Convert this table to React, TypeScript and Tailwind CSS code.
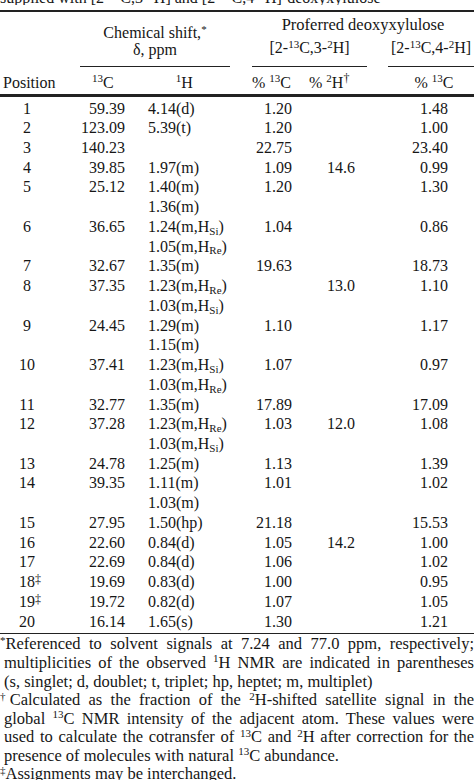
import React from "react"

type HShift = { v: string; sub?: string }

interface Row {
  pos: string
  mark?: string
  c13: string
  h1: HShift[]
  pc3: string
  ph3: string
  pc4: string
}

const rows: Row[] = [
  { pos: "1", c13: "59.39", h1: [{ v: "4.14(d)" }], pc3: "1.20", ph3: "", pc4: "1.48" },
  { pos: "2", c13: "123.09", h1: [{ v: "5.39(t)" }], pc3: "1.20", ph3: "", pc4: "1.00" },
  { pos: "3", c13: "140.23", h1: [], pc3: "22.75", ph3: "", pc4: "23.40" },
  { pos: "4", c13: "39.85", h1: [{ v: "1.97(m)" }], pc3: "1.09", ph3: "14.6", pc4: "0.99" },
  { pos: "5", c13: "25.12", h1: [{ v: "1.40(m)" }, { v: "1.36(m)" }], pc3: "1.20", ph3: "", pc4: "1.30" },
  {
    pos: "6",
    c13: "36.65",
    h1: [
      { v: "1.24(m,H", sub: "Si" },
      { v: "1.05(m,H", sub: "Re" },
    ],
    pc3: "1.04",
    ph3: "",
    pc4: "0.86",
  },
  { pos: "7", c13: "32.67", h1: [{ v: "1.35(m)" }], pc3: "19.63", ph3: "", pc4: "18.73" },
  {
    pos: "8",
    c13: "37.35",
    h1: [
      { v: "1.23(m,H", sub: "Re" },
      { v: "1.03(m,H", sub: "Si" },
    ],
    pc3: "",
    ph3: "13.0",
    pc4: "1.10",
  },
  { pos: "9", c13: "24.45", h1: [{ v: "1.29(m)" }, { v: "1.15(m)" }], pc3: "1.10", ph3: "", pc4: "1.17" },
  {
    pos: "10",
    c13: "37.41",
    h1: [
      { v: "1.23(m,H", sub: "Si" },
      { v: "1.03(m,H", sub: "Re" },
    ],
    pc3: "1.07",
    ph3: "",
    pc4: "0.97",
  },
  { pos: "11", c13: "32.77", h1: [{ v: "1.35(m)" }], pc3: "17.89", ph3: "", pc4: "17.09" },
  {
    pos: "12",
    c13: "37.28",
    h1: [
      { v: "1.23(m,H", sub: "Re" },
      { v: "1.03(m,H", sub: "Si" },
    ],
    pc3: "1.03",
    ph3: "12.0",
    pc4: "1.08",
  },
  { pos: "13", c13: "24.78", h1: [{ v: "1.25(m)" }], pc3: "1.13", ph3: "", pc4: "1.39" },
  { pos: "14", c13: "39.35", h1: [{ v: "1.11(m)" }, { v: "1.03(m)" }], pc3: "1.01", ph3: "", pc4: "1.02" },
  { pos: "15", c13: "27.95", h1: [{ v: "1.50(hp)" }], pc3: "21.18", ph3: "", pc4: "15.53" },
  { pos: "16", c13: "22.60", h1: [{ v: "0.84(d)" }], pc3: "1.05", ph3: "14.2", pc4: "1.00" },
  { pos: "17", c13: "22.69", h1: [{ v: "0.84(d)" }], pc3: "1.06", ph3: "", pc4: "1.02" },
  { pos: "18", mark: "‡", c13: "19.69", h1: [{ v: "0.83(d)" }], pc3: "1.00", ph3: "", pc4: "0.95" },
  { pos: "19", mark: "‡", c13: "19.72", h1: [{ v: "0.82(d)" }], pc3: "1.07", ph3: "", pc4: "1.05" },
  { pos: "20", c13: "16.14", h1: [{ v: "1.65(s)" }], pc3: "1.30", ph3: "", pc4: "1.21" },
]

function Iso({ n, el }: { n: string; el: string }) {
  return (
    <>
      <sup className="text-[11px]">{n}</sup>
      {el}
    </>
  )
}

function DataRow({ row }: { row: Row }) {
  return (
    <div className="grid grid-cols-[54px_71px_96px_71px_96px_60px] leading-[19.73px]">
      <div className="text-center">
        {row.pos}
        {row.mark && (
          <span className="inline-block w-0 align-top text-[12px] leading-[14px]">{row.mark}</span>
        )}
      </div>
      <div className="text-right">{row.c13}</div>
      <div className="pl-[23px] whitespace-nowrap">
        {row.h1.map((h, i) => (
          <div key={i}>
            {h.v}
            {h.sub && (
              <>
                <sub className="text-[11px]">{h.sub}</sub>)
              </>
            )}
          </div>
        ))}
      </div>
      <div className="text-right">{row.pc3}</div>
      <div className="pl-[35px]">{row.ph3}</div>
      <div className="text-right">{row.pc4}</div>
    </div>
  )
}

function Justified({ children, indent }: { children: React.ReactNode; indent?: boolean }) {
  return (
    <div
      className={`text-justify [text-align-last:justify] whitespace-nowrap ${indent ? "pl-[4px]" : ""}`}
    >
      {children}
    </div>
  )
}

export default function App() {
  return (
    <div
      className="w-[474px] h-[780px] overflow-hidden bg-white text-[16px] text-[#161616]"
      style={{ fontFamily: '"Liberation Serif", "Times New Roman", serif' }}
    >
      <div className="h-[5px] overflow-hidden">
        <div className="-mt-[12px] leading-[19px] whitespace-nowrap">
          supplied with [2-<Iso n="13" el="C" />,3-<Iso n="2" el="H" />] and [2-
          <Iso n="13" el="C" />,4-<Iso n="2" el="H" />]-deoxyxylulose
        </div>
      </div>

      <div className="mt-[5px] h-[1.5px] bg-[#222]" />

      <div className="grid h-[82.5px] grid-cols-[80px_150px_22px_222px] items-end pb-[2.5px]">
        <div className="pl-[3px] leading-[19px]">Position</div>

        <div className="flex flex-col">
          <div className="text-center leading-[17px]">
            Chemical shift,<sup className="text-[11px]">*</sup>
          </div>
          <div className="text-center leading-[17px]">δ, ppm</div>
          <div className="mt-[7.5px] h-[1.2px] bg-[#222]" />
          <div className="mt-[5.5px] flex leading-[19px]">
            <span className="ml-[12px]">
              <Iso n="13" el="C" />
            </span>
            <span className="ml-[62px]">
              <Iso n="1" el="H" />
            </span>
          </div>
        </div>

        <div />

        <div className="flex flex-col">
          <div className="text-center leading-[19px] text-[16.5px]">Proferred deoxyxylulose</div>
          <div className="mt-[4px] flex gap-[21px]">
            <div className="flex w-[115px] flex-col">
              <div className="text-center leading-[19px] whitespace-nowrap">
                [2-<Iso n="13" el="C" />,3-<Iso n="2" el="H" />]
              </div>
              <div className="mt-[8.5px] h-[1.2px] bg-[#222]" />
              <div className="mt-[5.5px] flex leading-[19px] whitespace-nowrap">
                <span>
                  % <Iso n="13" el="C" />
                </span>
                <span className="ml-[18px]">
                  % <Iso n="2" el="H" />
                  <sup className="text-[12px]">†</sup>
                </span>
              </div>
            </div>
            <div className="flex w-[86px] flex-col">
              <div className="text-center leading-[19px] whitespace-nowrap">
                [2-<Iso n="13" el="C" />,4-<Iso n="2" el="H" />]
              </div>
              <div className="mt-[8.5px] h-[1.2px] bg-[#222]" />
              <div className="mt-[5.5px] pl-[6px] text-center leading-[19px] whitespace-nowrap">
                % <Iso n="13" el="C" />
              </div>
            </div>
          </div>
        </div>
      </div>

      <div className="h-[2.5px] bg-[#222]" />

      <div className="pt-[2px]">
        {rows.map((r) => (
          <DataRow key={r.pos} row={r} />
        ))}
      </div>

      <div className="mt-[1.5px] h-[1.5px] bg-[#222]" />

      <div className="mt-[1px] text-[16.5px] leading-[18.6px]">
        <Justified>
          <sup className="text-[11px]">*</sup>Referenced to solvent signals at 7.24 and 77.0 ppm, respectively;
        </Justified>
        <Justified indent>
          multiplicities of the observed <Iso n="1" el="H" /> NMR are indicated in parentheses
        </Justified>
        <div className="pl-[4px]">(s, singlet; d, doublet; t, triplet; hp, heptet; m, multiplet)</div>
        <Justified>
          <sup className="text-[11px]">†</sup>Calculated as the fraction of the <Iso n="2" el="H" />-shifted satellite
          signal in the
        </Justified>
        <Justified indent>
          global <Iso n="13" el="C" /> NMR intensity of the adjacent atom. These values were
        </Justified>
        <Justified indent>
          used to calculate the cotransfer of <Iso n="13" el="C" /> and <Iso n="2" el="H" /> after correction for the
        </Justified>
        <div className="pl-[4px]">
          presence of molecules with natural <Iso n="13" el="C" /> abundance.
        </div>
        <div>
          <sup className="text-[11px]">‡</sup>Assignments may be interchanged.
        </div>
      </div>
    </div>
  )
}
